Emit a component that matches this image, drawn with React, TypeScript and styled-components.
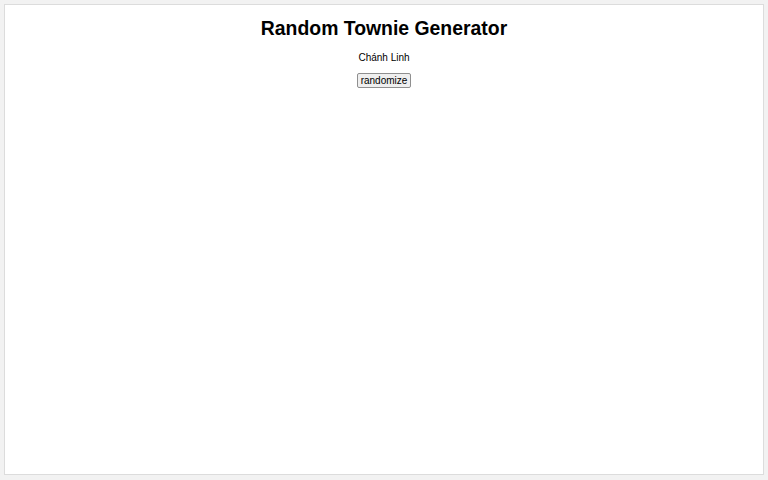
import React, { useState } from "react";
import styled, { createGlobalStyle } from "styled-components";

const Global = createGlobalStyle`
  html, body { margin: 0; padding: 0; background: #f2f2f2; }
  body { font-family: "Liberation Sans", Arial, sans-serif; }
`;

const Page = styled.div`
  padding: 4px 4px 5px 4px;
  height: 480px;
  box-sizing: border-box;
  display: flex;
`;

const Panel = styled.main`
  flex: 1;
  background: #ffffff;
  border: 1px solid #dcdcdc;
  display: flex;
  flex-direction: column;
  align-items: center;
`;

const Title = styled.h1`
  margin: 12px 0 0 0;
  font-size: 19.4px;
  font-weight: bold;
  line-height: 23px;
  color: #000;
`;

const Name = styled.p`
  margin: 12px 0 0 0;
  font-size: 10px;
  line-height: 12px;
  color: #000;
`;

const Button = styled.button`
  margin-top: 9px;
  font-family: "Liberation Sans", Arial, sans-serif;
  font-size: 10px;
  line-height: 11px;
  padding: 1px 3px;
  color: #000;
  background: #efefef;
  border: 1px solid #8f8f8f;
  border-radius: 2px;
`;

const names = ["Chánh Linh", "Mai Anh", "Quốc Bảo", "Thu Hà"];

export default function App() {
  const [i, setI] = useState(0);
  return (
    <>
      <Global />
      <Page>
        <Panel>
          <Title>Random Townie Generator</Title>
          <Name>{names[i]}</Name>
          <Button onClick={() => setI((i + 1) % names.length)}>randomize</Button>
        </Panel>
      </Page>
    </>
  );
}
